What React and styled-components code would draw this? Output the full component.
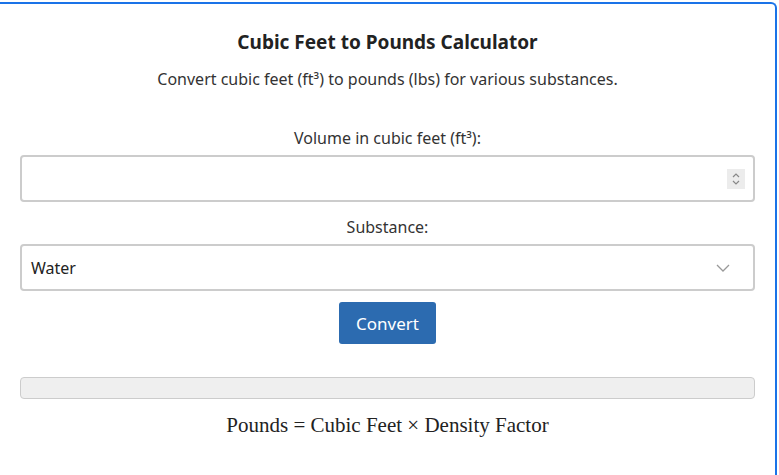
import React, { useState } from 'react'
import styled, { createGlobalStyle } from 'styled-components'

const Global = createGlobalStyle`
	body {
		margin: 0;
		background: #fff;
		font-family: "Noto Sans", "Open Sans", sans-serif;
		color: #333;
	}
`

const Frame = styled.div`
	box-sizing: border-box;
	width: 777px;
	height: 475px;
	margin-top: 2px;
	border-top: 2px solid #1a73e8;
	border-right: 2px solid #1a73e8;
	border-top-right-radius: 6px;
	padding: 25px 20px 0 20px;
	display: flex;
	flex-direction: column;
	align-items: stretch;
`

const Title = styled.h2`
	margin: 0;
	text-align: center;
	font-size: 19px;
	font-weight: 700;
	color: #222;
	line-height: 26px;
`

const Intro = styled.p`
	margin: 12px 0 0;
	text-align: center;
	font-size: 16px;
	line-height: 24px;
`

const Field = styled.div`
	display: flex;
	flex-direction: column;
	margin-top: ${p => p.gap}px;
`

const Label = styled.label`
	text-align: center;
	font-size: 16px;
	line-height: 22px;
	margin-bottom: 6px;
`

const Box = styled.div`
	box-sizing: border-box;
	height: 47px;
	border: 2px solid #ccc;
	border-radius: 4px;
	display: flex;
	align-items: center;
	justify-content: space-between;
	padding: 0 8px 0 8px;
	font-size: 16px;
	color: #222;
`

const Spinner = styled.div`
	width: 18px;
	height: 20px;
	background: #ececec;
	display: flex;
	align-items: center;
	justify-content: center;
`

const Button = styled.button`
	align-self: center;
	margin-top: 11px;
	width: 97px;
	height: 42px;
	border: none;
	border-radius: 3px;
	background: #2c6bb0;
	color: #fff;
	font-family: inherit;
	font-size: 17px;
`

const Result = styled.div`
	box-sizing: border-box;
	margin-top: 33px;
	height: 22px;
	background: #efefef;
	border: 1px solid #ccc;
	border-radius: 4px;
`

const Formula = styled.div`
	margin-top: 14px;
	text-align: center;
	font-family: "Liberation Serif", "DejaVu Serif", serif;
	font-size: 21px;
	color: #222;
`

export default function App() {
	const [substance] = useState('Water')
	return (
		<>
			<Global />
			<Frame>
				<Title>Cubic Feet to Pounds Calculator</Title>
				<Intro>Convert cubic feet (ft³) to pounds (lbs) for various substances.</Intro>
				<Field gap={36}>
					<Label>Volume in cubic feet (ft³):</Label>
					<Box>
						<span />
						<Spinner>
							<svg width="10" height="16" viewBox="0 0 10 16" fill="none" stroke="#888" strokeWidth="1.2">
								<path d="M2 6 L5 3 L8 6" />
								<path d="M2 10 L5 13 L8 10" />
							</svg>
						</Spinner>
					</Box>
				</Field>
				<Field gap={14}>
					<Label>Substance:</Label>
					<Box>
						<span style={{ paddingLeft: 1 }}>{substance}</span>
						<svg width="16" height="10" viewBox="0 0 16 10" fill="none" stroke="#999" strokeWidth="1.3" style={{ marginRight: 14 }}>
							<path d="M2 2 L8 8 L14 2" />
						</svg>
					</Box>
				</Field>
				<Button>Convert</Button>
				<Result />
				<Formula>Pounds = Cubic Feet × Density Factor</Formula>
			</Frame>
		</>
	)
}
